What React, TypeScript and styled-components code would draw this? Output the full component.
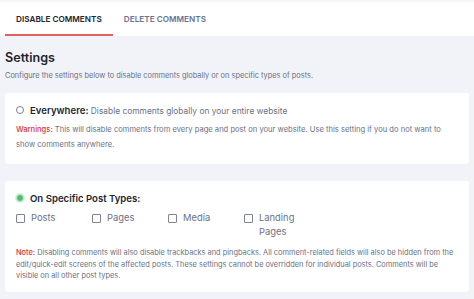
import { useState } from "react";
import styled, { createGlobalStyle } from "styled-components";

const GlobalStyle = createGlobalStyle`
  html, body {
    margin: 0;
    padding: 0;
    background: #f1f3f8;
  }
  body {
    font-family: Inter, "Noto Sans", sans-serif;
    color: #6b7184;
  }
`;

const Page = styled.div`
  width: 474px;
  height: 299px;
  overflow: hidden;
  padding: 0 5px;
  box-sizing: border-box;
  background: #f1f3f8;
`;

const TabBar = styled.div`
  display: flex;
  align-items: stretch;
  height: 36px;
  margin: 0 -5px;
  padding: 0 0 0 5px;
  background: #fff;
  border-top: 2px solid #f5f6f8;
  box-sizing: border-box;
`;

const Tab = styled.button<{ $active?: boolean }>`
  border: 0;
  background: none;
  padding: 1px 11px 0;
  font-family: inherit;
  font-size: 8.2px;
  font-weight: 600;
  color: ${(p) => (p.$active ? "#23252d" : "#6b7190")};
  border-bottom: 2px solid ${(p) => (p.$active ? "#e4605d" : "transparent")};
  cursor: pointer;
`;

const Title = styled.h2`
  margin: 13px 0 0;
  font-size: 12.6px;
  font-weight: 600;
  color: #23252d;
  line-height: 18px;
`;

const Desc = styled.p`
  margin: 3px 0 0;
  font-size: 7.4px;
  line-height: 12px;
  color: #6b7184;
`;

const Card = styled.div<{ $top: number; $height: number }>`
  margin-top: ${(p) => p.$top}px;
  height: ${(p) => p.$height}px;
  background: #fff;
  border-radius: 3px;
  padding: 9px 11px 0;
  box-sizing: border-box;
`;

const OptionRow = styled.label`
  display: flex;
  align-items: center;
  gap: 6px;
  height: 16px;
  cursor: pointer;
`;

const Radio = styled.span<{ $checked?: boolean }>`
  width: 6px;
  height: 6px;
  border-radius: 50%;
  border: 1px solid ${(p) => (p.$checked ? "#cfe9d6" : "#7a7f8e")};
  background: ${(p) => (p.$checked ? "#4fbf6b" : "#fff")};
  box-shadow: ${(p) => (p.$checked ? "0 0 0 1px #d7f0de" : "none")};
  flex: none;
`;

const OptionText = styled.span`
  font-size: 8.4px;
  color: #6b7184;
  b {
    font-size: 9.6px;
    font-weight: 600;
    color: #23252d;
  }
`;

const Small = styled.p<{ $top: number; $lh: number; $size: number }>`
  margin: ${(p) => p.$top}px 0 0;
  font-size: ${(p) => p.$size}px;
  line-height: ${(p) => p.$lh}px;
  color: #6b7184;
  b {
    font-weight: 500;
    color: #d8353a;
  }
`;

const TypeGrid = styled.div`
  display: grid;
  grid-template-columns: repeat(4, 76px);
  margin-top: 5px;
  height: 34px;
`;

const TypeItem = styled.label`
  display: flex;
  align-items: flex-start;
  gap: 6px;
  font-size: 9.4px;
  line-height: 14px;
  color: #6b7184;
  cursor: pointer;
  span {
    width: 48px;
  }
`;

const Box = styled.i`
  width: 7px;
  height: 7px;
  margin-top: 3px;
  border: 1px solid #7f8492;
  border-radius: 1px;
  flex: none;
`;

export default function App() {
  const [tab, setTab] = useState(0);
  const types = ["Posts", "Pages", "Media", "Landing Pages"];
  return (
    <>
      <GlobalStyle />
      <Page>
        <TabBar>
          <Tab $active={tab === 0} onClick={() => setTab(0)}>
            DISABLE COMMENTS
          </Tab>
          <Tab $active={tab === 1} onClick={() => setTab(1)}>
            DELETE COMMENTS
          </Tab>
        </TabBar>
        <Title>Settings</Title>
        <Desc>
          Configure the settings below to disable comments globally or on specific types of posts.
        </Desc>
        <Card $top={11} $height={71}>
          <OptionRow>
            <Radio />
            <OptionText>
              <b>Everywhere:</b> Disable comments globally on your entire website
            </OptionText>
          </OptionRow>
          <Small $top={4} $lh={15} $size={7.6}>
            <b>Warnings:</b> This will disable comments from every page and post on your
            website. Use this setting if you do not want to show comments anywhere.
          </Small>
        </Card>
        <Card $top={17} $height={111}>
          <OptionRow>
            <Radio $checked />
            <OptionText>
              <b>On Specific Post Types:</b>
            </OptionText>
          </OptionRow>
          <TypeGrid>
            {types.map((t) => (
              <TypeItem key={t}>
                <Box />
                <span>{t}</span>
              </TypeItem>
            ))}
          </TypeGrid>
          <Small $top={2} $lh={11.5} $size={7.4}>
            <b>Note:</b> Disabling comments will also disable trackbacks and pingbacks. All
            comment-related fields will also be hidden from the edit/quick-edit screens of the
            affected posts. These settings cannot be overridden for individual posts. Comments
            will be visible on all other post types.
          </Small>
        </Card>
      </Page>
    </>
  );
}
